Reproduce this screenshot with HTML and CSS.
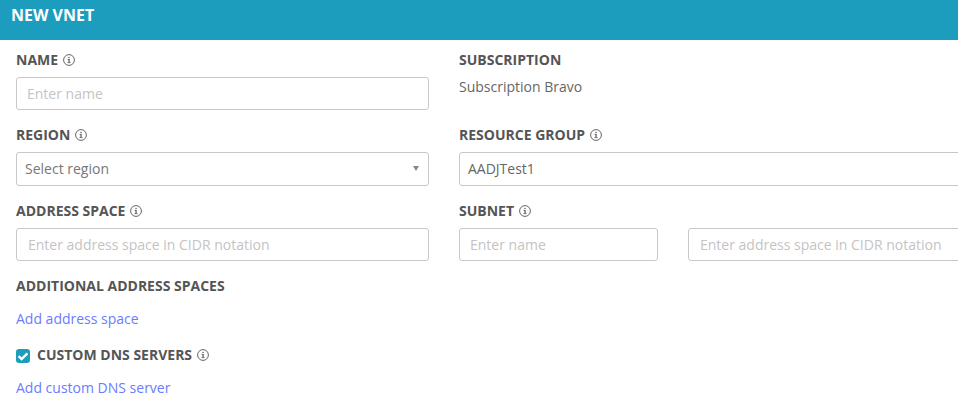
FILE: index.html
```html
<!DOCTYPE html>
<html lang="en">
<head>
<meta charset="utf-8">
<title>New VNET</title>
<link rel="stylesheet" href="styles.css">
</head>
<body>
<svg class="defs" width="0" height="0" aria-hidden="true"><defs>
<symbol id="info" viewBox="0 0 12 12"><circle cx="6" cy="6" r="5.4" fill="none" stroke="currentColor" stroke-width="1"/><rect x="5.4" y="5" width="1.3" height="3.6" fill="currentColor"/><rect x="4.6" y="5" width="1.6" height="0.9" fill="currentColor"/><rect x="4.5" y="8.2" width="3.1" height="0.9" fill="currentColor"/><rect x="5.3" y="2.9" width="1.4" height="1.3" fill="currentColor"/></symbol>
</defs></svg>
<header class="topbar"><h1 class="title">NEW VNET</h1></header>
<main class="form">
  <div class="row">
    <div class="col">
      <div class="label">NAME <svg class="info"><use href="#info"/></svg></div>
      <div class="input placeholder">Enter name</div>
    </div>
    <div class="col col-wide">
      <div class="label">SUBSCRIPTION</div>
      <div class="static">Subscription Bravo</div>
    </div>
  </div>
  <div class="row row-select">
    <div class="col">
      <div class="label">REGION <svg class="info"><use href="#info"/></svg></div>
      <div class="input select">Select region<span class="caret"></span></div>
    </div>
    <div class="col col-wide">
      <div class="label">RESOURCE GROUP <svg class="info"><use href="#info"/></svg></div>
      <div class="input value">AADJTest1</div>
    </div>
  </div>
  <div class="row">
    <div class="col">
      <div class="label">ADDRESS SPACE <svg class="info"><use href="#info"/></svg></div>
      <div class="input placeholder cidr">Enter address space in CIDR notation</div>
    </div>
    <div class="col col-wide">
      <div class="label">SUBNET <svg class="info"><use href="#info"/></svg></div>
      <div class="subnet">
        <div class="input placeholder subnet-name">Enter name</div>
        <div class="input placeholder cidr subnet-cidr">Enter address space in CIDR notation</div>
      </div>
    </div>
  </div>
  <div class="section">
    <div class="label">ADDITIONAL ADDRESS SPACES</div>
    <a class="link" href="#">Add address space</a>
  </div>
  <div class="section">
    <div class="label"><span class="checkbox"><svg viewBox="0 0 14 14" width="14" height="14"><path d="M2.6 7.2l3 2.8 5.8-5.6" fill="none" stroke="#fff" stroke-width="2.4"/></svg></span>CUSTOM DNS SERVERS <svg class="info"><use href="#info"/></svg></div>
    <a class="link" href="#">Add custom DNS server</a>
  </div>
</main>
</body>
</html>
```
FILE: styles.css
```css
html, body {
  margin: 0;
  padding: 0;
  height: 401px;
  width: 958px;
  overflow: hidden;
  background: #fff;
  font-family: "Open Sans", sans-serif;
  color: #555;
}
.defs { position: absolute; }
.topbar {
  height: 40px;
  background: #1c9dbd;
  padding: 0 11px;
}
.title {
  margin: 0;
  font-size: 16px;
  line-height: 30px;
  font-weight: 700;
  color: #fff;
}
.form { padding: 10px 0 0 16px; width: 958px; overflow: hidden; box-sizing: border-box; }
.row { display: flex; gap: 30px; height: 75px; }
.row-select { height: 76px; }
.col { width: 413px; flex: none; }
.col-wide { width: 560px; }
.label {
  display: flex;
  align-items: center;
  gap: 5px;
  height: 20px;
  margin-bottom: 7px;
  font-size: 14px;
  font-weight: 700;
  line-height: 20px;
  color: #555;
}
.info { width: 12px; height: 12px; color: #666; flex: none; }
.input {
  box-sizing: border-box;
  height: 33px;
  border: 1px solid #c8c8c8;
  border-radius: 3px;
  padding: 0 10px;
  font-size: 14px;
  line-height: 31px;
  white-space: nowrap;
  overflow: hidden;
}
.placeholder { color: #c4c4c4; }
.cidr { padding: 0 11px; }
.value { color: #666; padding: 0 8px; height: 34px; line-height: 32px; }
.select { position: relative; padding: 0 8px; color: #777; height: 34px; line-height: 32px; }
.caret {
  position: absolute;
  right: 9px;
  top: 13px;
  border: 3.5px solid transparent;
  border-top: 5px solid #888;
  border-bottom: 0;
}
.static { font-size: 14px; line-height: 20px; color: #666; }
.subnet { display: flex; gap: 30px; }
.subnet-name { width: 199px; flex: none; }
.subnet-cidr { width: 300px; flex: none; }
.section { height: 69px; }
.section .label { margin-bottom: 13px; }
.link { display: block; font-size: 14px; line-height: 20px; color: #6b7cff; text-decoration: none; }
.checkbox {
  width: 14px;
  height: 14px;
  border-radius: 3px;
  background: #1c9dbd;
  margin: 2px 2px 0 0;
  flex: none;
  display: flex;
}
```
